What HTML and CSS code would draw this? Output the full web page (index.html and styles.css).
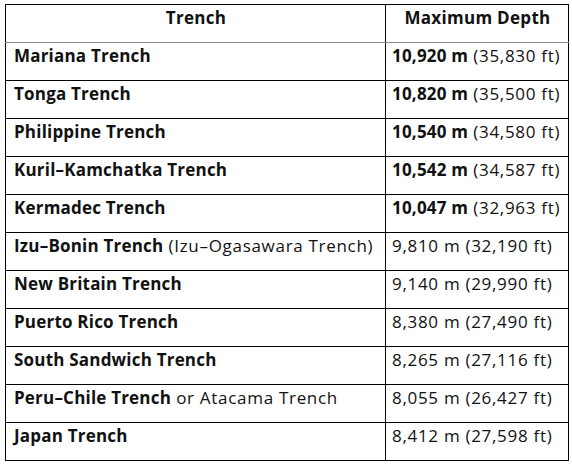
FILE: index.html
```html
<!DOCTYPE html>
<html>
<head>
<meta charset="utf-8">
<link rel="stylesheet" href="styles.css">
</head>
<body>
<table class="trenches">
  <thead>
    <tr><th class="col-name">Trench</th><th class="col-depth">Maximum Depth</th></tr>
  </thead>
  <tbody>
    <tr><td><b>Mariana Trench</b></td><td><b>10,920 m</b> (35,830 ft)</td></tr>
    <tr><td><b>Tonga Trench</b></td><td><b>10,820 m</b> (35,500 ft)</td></tr>
    <tr><td><b>Philippine Trench</b></td><td><b>10,540 m</b> (34,580 ft)</td></tr>
    <tr><td><b>Kuril–Kamchatka Trench</b></td><td><b>10,542 m</b> (34,587 ft)</td></tr>
    <tr><td><b>Kermadec Trench</b></td><td><b>10,047 m</b> (32,963 ft)</td></tr>
    <tr><td><b>Izu–Bonin Trench</b> (Izu–Ogasawara Trench)</td><td>9,810 m (32,190 ft)</td></tr>
    <tr><td><b>New Britain Trench</b></td><td>9,140 m (29,990 ft)</td></tr>
    <tr><td><b>Puerto Rico Trench</b></td><td>8,380 m (27,490 ft)</td></tr>
    <tr><td><b>South Sandwich Trench</b></td><td>8,265 m (27,116 ft)</td></tr>
    <tr><td><b>Peru–Chile Trench</b> or Atacama Trench</td><td>8,055 m (26,427 ft)</td></tr>
    <tr><td><b>Japan Trench</b></td><td>8,412 m (27,598 ft)</td></tr>
  </tbody>
</table>
</body>
</html>
```
FILE: styles.css
```css
html, body { background: #fff; }
body {
  margin: 4px 0 0 5px;
  font-family: "Open Sans", "DejaVu Sans", sans-serif;
  font-size: 17px;
  color: #111;
}
.trenches {
  border-collapse: collapse;
  width: 564px;
  table-layout: fixed;
}
.trenches th, .trenches td {
  border: 1px solid #000;
  height: 38px;
  box-sizing: border-box;
  padding: 1px 7px 11px 8px;
  vertical-align: top;
  line-height: 23px;
  text-align: left;
  white-space: nowrap;
  letter-spacing: 0.7px;
}
.trenches th {
  text-align: center;
  font-weight: 700;
  letter-spacing: 0.3px;
  border-bottom-color: #888;
}
.trenches .col-name { width: 380px; }
.trenches td + td { padding-left: 6px; }
.trenches b { font-weight: 700; letter-spacing: 0.2px; }
```
